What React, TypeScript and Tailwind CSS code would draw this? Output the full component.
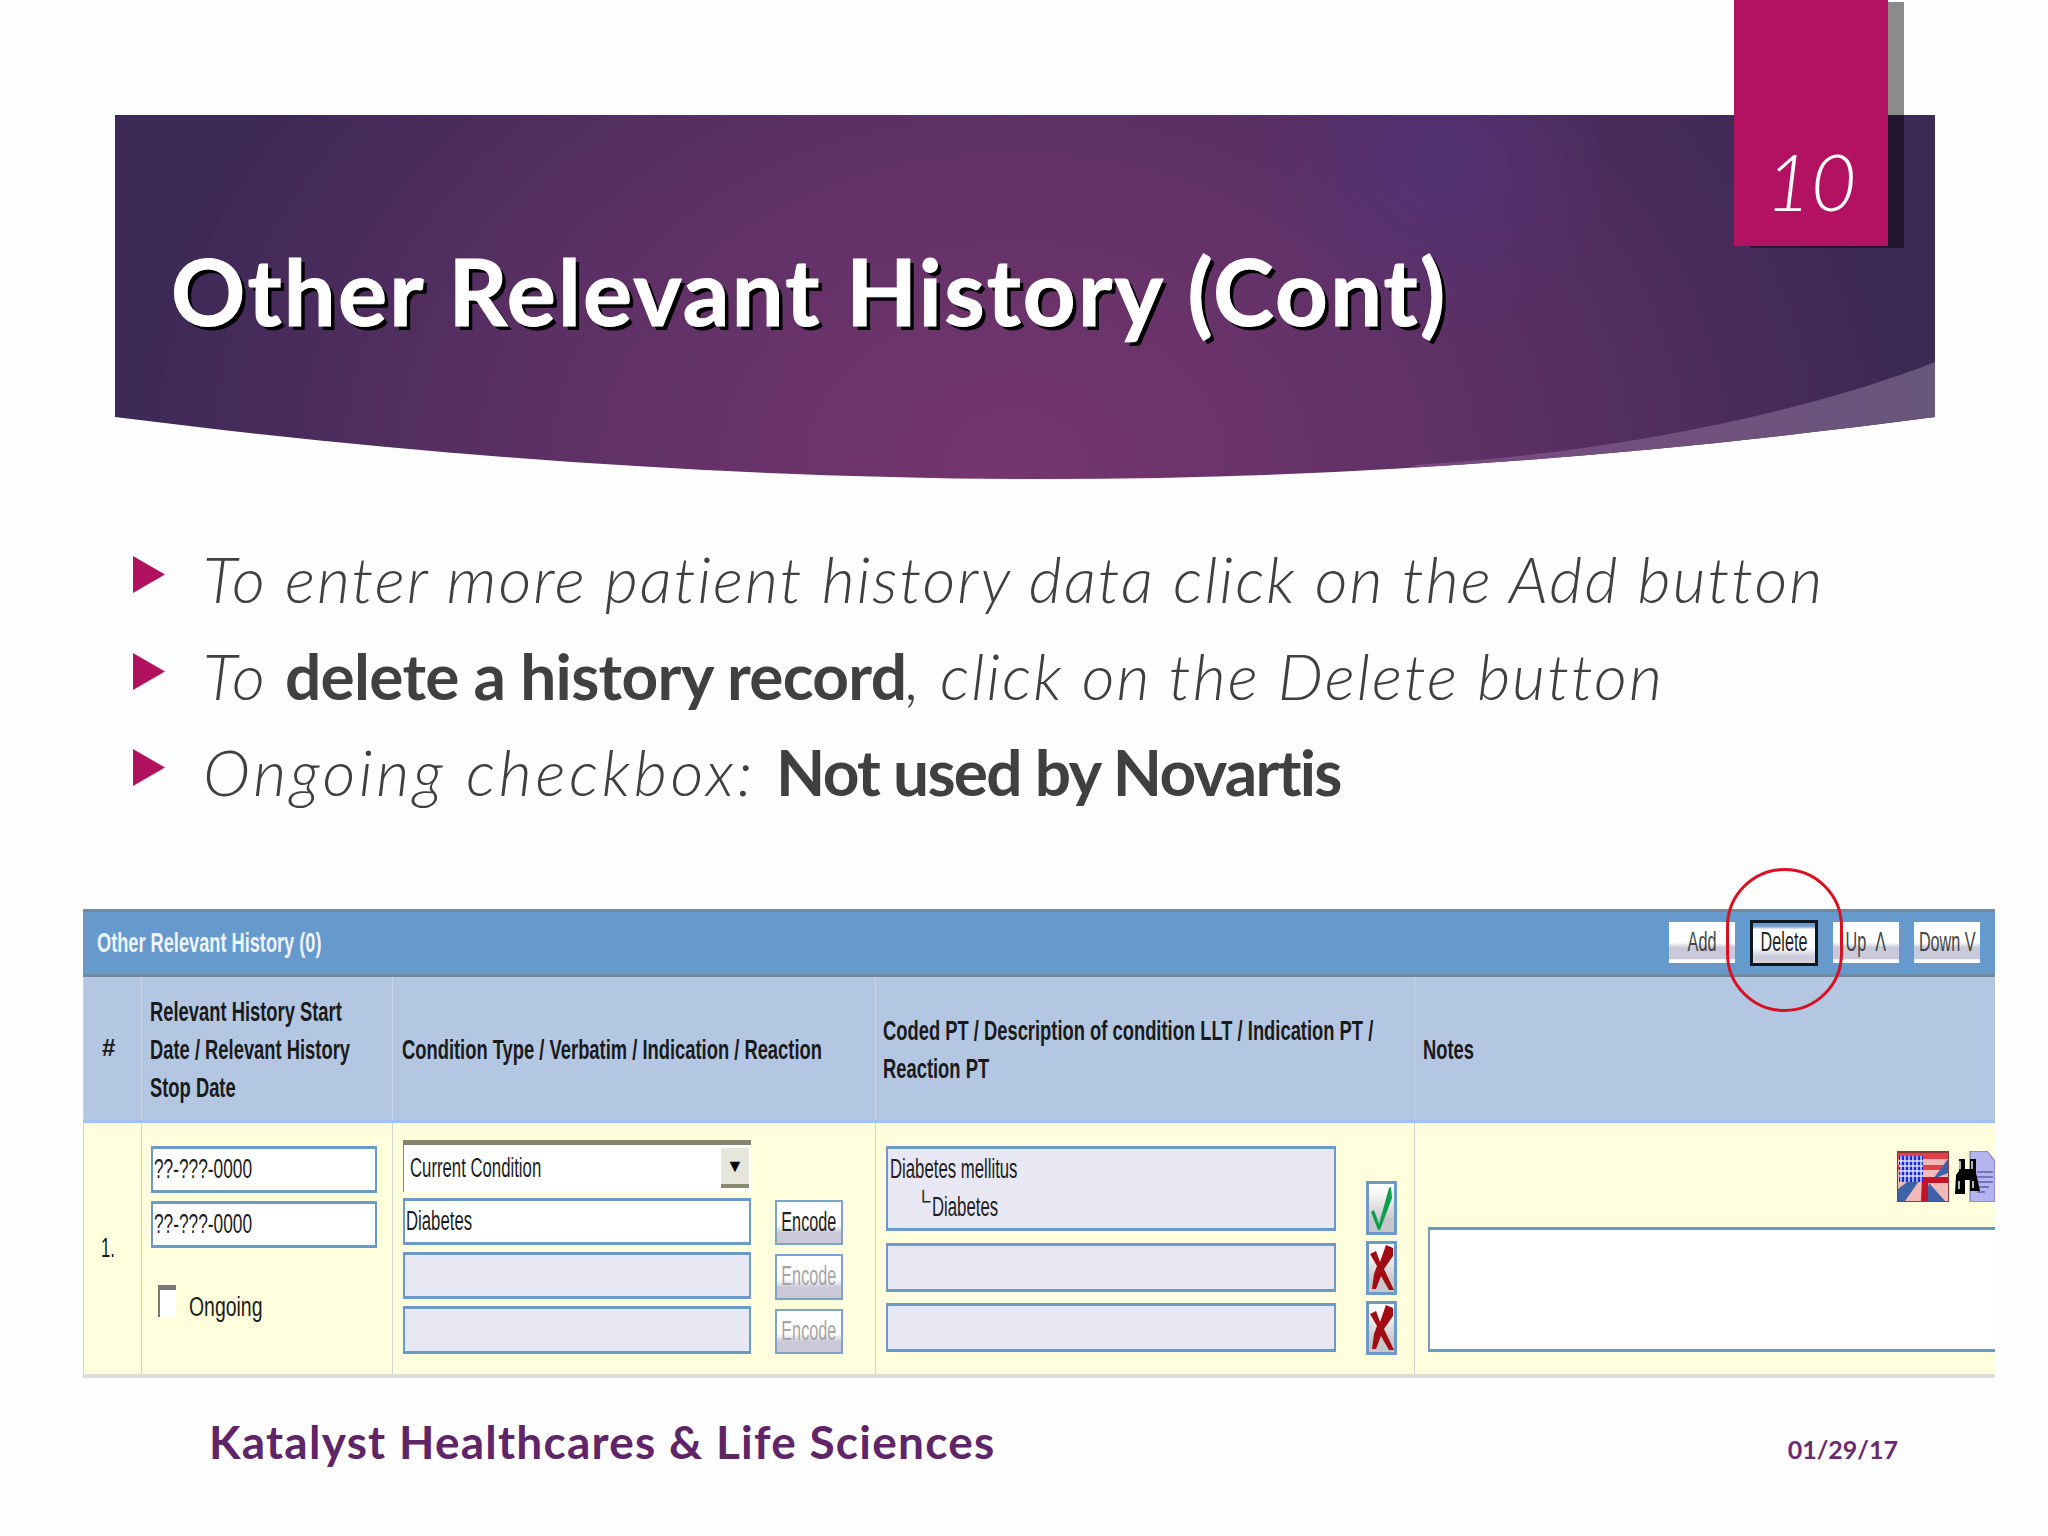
import type { ReactNode } from "react"

const bannerShape = "M0 0H1820V302C1530 340 1240 364 930 364C620 364 300 340 0 302Z"

function Banner() {
  return (
    <div className="relative ml-[115px] mt-[115px] h-[365px] w-[1820px]">
      <svg className="absolute inset-0" width="1820" height="365" viewBox="0 0 1820 365">
        <defs>
          <radialGradient id="ban" gradientUnits="userSpaceOnUse" cx="900" cy="330" r="900" gradientTransform="translate(0 100) scale(1 0.75)">
            <stop offset="0" stopColor="#75366f" />
            <stop offset="0.55" stopColor="#5c3065" />
            <stop offset="1" stopColor="#3c2955" />
          </radialGradient>
          <radialGradient id="glow" gradientUnits="userSpaceOnUse" cx="1320" cy="50" r="170">
            <stop offset="0" stopColor="#533376" stopOpacity="0.9" />
            <stop offset="1" stopColor="#533376" stopOpacity="0" />
          </radialGradient>
          <linearGradient id="swoosh" x1="0" y1="0" x2="1" y2="0">
            <stop offset="0" stopColor="#7b4a80" />
            <stop offset="1" stopColor="#68567c" />
          </linearGradient>
          <clipPath id="banClip">
            <path d={bannerShape} />
          </clipPath>
        </defs>
        <path d={bannerShape} fill="url(#ban)" />
        <path d={bannerShape} fill="url(#glow)" />
        <path d="M1820 247C1700 295 1500 338 1300 350V400H1820Z" fill="url(#swoosh)" clipPath="url(#banClip)" />
      </svg>
      <h1 className="relative pl-[56px] pt-[128px] font-['Lato',sans-serif] text-[92px] font-bold leading-[96px] tracking-[2.2px] whitespace-nowrap text-white [-webkit-text-stroke:1px_white] [text-shadow:4px_4px_0_#000]">
        Other Relevant History (Cont)
      </h1>
    </div>
  )
}

function Bullet({ children }: { children: ReactNode }) {
  return (
    <li className="flex h-[96.5px] gap-[38px]">
      <svg className="mt-[3px] shrink-0" width="32" height="37" viewBox="0 0 32 37">
        <path d="M0 0L32 18.5L0 37Z" fill="#b0125f" />
      </svg>
      <p className="-mt-[10px] font-['Lato',sans-serif] text-[64px] font-light italic leading-[72px] tracking-[2px] whitespace-nowrap text-[#404040]">
        {children}
      </p>
    </li>
  )
}

function Btn({ label, focused }: { label: string; focused?: boolean }) {
  return focused ? (
    <div className="flex h-[46px] w-[68px] items-center justify-center border-[3px] border-[#101820] bg-[linear-gradient(#6f9ccb_0%,#6f9ccb_8%,#ffffff_16%,#ffffff_60%,#c9c9d9_85%,#d6d6e2_100%)]">
      <span className="origin-center scale-x-[0.6] whitespace-nowrap text-[27px] text-[#222]">{label}</span>
    </div>
  ) : (
    <div className="flex h-[41px] w-[66px] items-center justify-center bg-[linear-gradient(#ffffff_0%,#ffffff_50%,#c9c9d9_62%,#c9c9d9_90%,#ffffff_92%)]">
      <span className="origin-center scale-x-[0.6] whitespace-nowrap text-[27px] text-[#444]">{label}</span>
    </div>
  )
}

function Encode({ disabled, h }: { disabled?: boolean; h: string }) {
  return (
    <div className={`${h} flex w-[68px] items-center justify-center border-2 border-[#7ba3cc] bg-[linear-gradient(#ffffff_0%,#ffffff_55%,#c9c9d9_75%,#c9c9d9_100%)]`}>
      <span className={disabled ? "origin-center scale-x-[0.6] whitespace-nowrap text-[27px] text-[#a5a5a5]" : "origin-center scale-x-[0.6] whitespace-nowrap text-[27px] text-[#222]"}>
        Encode
      </span>
    </div>
  )
}

function IconBtn({ kind }: { kind: "check" | "x" }) {
  return (
    <div className="h-[54px] w-[31px] border-[3px] border-[#6b9ac9] bg-[linear-gradient(#ffffff_0%,#f4f4f4_25%,#c6c6cc_75%,#c6c6cc_100%)]">
      <svg width="25" height="48" viewBox="0 0 25 48">
        {kind === "check" ? (
          <path d="M2 28L5 26L10 40L20 4L22 3L23 14L11 46H9Z" fill="#0aa04a" />
        ) : (
          <path d="M1 10L7 7L11 18L17 1L24 4L24 12L15 25L25 46L20 46L12 32L7 45H3L5 30L8 22Z" fill="#a00c12" />
        )}
      </svg>
    </div>
  )
}

function Field({ className, children }: { className: string; children?: ReactNode }) {
  return (
    <div className={`${className} flex items-center overflow-hidden border-2 border-y-[3px] border-[#6b9ac9] pl-[1px]`}>
      {children}
    </div>
  )
}

function Cell({ children, className = "scale-x-[0.62]" }: { children: string; className?: string }) {
  return <span className={`block origin-left whitespace-nowrap text-[27px] leading-[38px] text-[#1c1c1c] ${className}`}>{children}</span>
}

function Head({ children }: { children: string }) {
  return <span className="block origin-left scale-x-[0.68] whitespace-nowrap text-[27px] font-bold leading-[38px] text-[#1a1a1a]">{children}</span>
}

function FlagIcons() {
  return (
    <div className="flex justify-end gap-[6px]">
      <svg width="52" height="51" viewBox="0 0 52 51">
        <rect width="52" height="51" fill="#8a3a3f" />
        <rect x="1" y="2" width="50" height="48" fill="#f3b9b9" />
        <path d="M1 2H51V8H1ZM1 14H51V19H1Z" fill="#e0404a" />
        <path d="M1 38L14 28L22 30L8 50H1ZM28 50L32 32L48 50ZM36 28L51 8V22Z" fill="#3d62a8" />
        <path d="M25 26H51V32H31V50H24Z" fill="#c0142a" />
        <rect x="2" y="5" width="24" height="26" fill="#1a28d8" />
        <path d="M4 5V31M8 5V31M12 5V31M16 5V31M20 5V31M24 5V31M2 10H26M2 15H26M2 20H26M2 25H26" stroke="#dfe4ff" strokeWidth="1.4" />
      </svg>
      <svg width="40" height="51" viewBox="0 0 40 51">
        <path d="M15 0H32L40 10V51H15Z" fill="#b4b4ee" stroke="#6a6ab0" />
        <path d="M22 21H38M22 26H38M22 31H38M22 36H34M22 41H30" stroke="#6060a8" strokeWidth="1.6" />
        <path d="M4 8H10V18H15V8H21V22L25 40H15V29H10V43H0L1 24L4 20Z" fill="#000" />
        <path d="M5 10V18M17 10V18M4 30V38M18 30V37" stroke="#fff" strokeWidth="1.4" />
      </svg>
    </div>
  )
}

function DataTable() {
  return (
    <div className="relative ml-[83px] mt-[66px] w-[1912px]">
      <div className="flex h-[68px] items-center justify-between border-y-[3px] border-[#76889b] bg-[#6699cc] pl-[14px] pr-[15px]">
        <span className="origin-left scale-x-[0.65] whitespace-nowrap text-[28px] font-bold text-[#eef4fb]">Other Relevant History (0)</span>
        <div className="flex items-center gap-[15px]">
          <Btn label="Add" />
          <Btn label="Delete" focused />
          <Btn label={"Up\u00a0\u00a0Λ"} />
          <Btn label="Down V" />
        </div>
      </div>

      <div className="grid h-[146px] grid-cols-[59px_251px_483px_539px_580px] border-b-[3px] border-[#9cc3ec] bg-[#b3c7e2]">
        <div className="flex items-center border-x border-[#c6d4e6] pl-[18px]">
          <span className="text-[24px] font-bold text-[#1a1a1a]">#</span>
        </div>
        <div className="flex flex-col justify-center border-r border-[#c6d4e6] pl-[8px] pt-[3px]">
          <Head>Relevant History Start</Head>
          <Head>Date / Relevant History</Head>
          <Head>Stop Date</Head>
        </div>
        <div className="flex flex-col justify-center border-r border-[#c6d4e6] pl-[9px] pt-[3px]">
          <Head>Condition Type / Verbatim / Indication / Reaction</Head>
        </div>
        <div className="flex flex-col justify-center border-r border-[#c6d4e6] pl-[7px] pt-[3px]">
          <Head>Coded PT / Description of condition LLT / Indication PT /</Head>
          <Head>Reaction PT</Head>
        </div>
        <div className="flex flex-col justify-center pl-[8px] pt-[3px]">
          <Head>Notes</Head>
        </div>
      </div>

      <div className="grid h-[255px] grid-cols-[59px_251px_483px_539px_580px] border-b-4 border-[#dcdcdc] bg-[#ffffdd]">
        <div className="flex items-center border-x border-[#ccd4dc] pl-[17px]">
          <Cell>1.</Cell>
        </div>
        <div className="flex flex-col gap-[8px] border-r border-[#ccd4dc] pl-[9px] pt-[23px]">
          <Field className="h-[47px] w-[226px] bg-white"><Cell className="scale-x-[0.64]">??-???-0000</Cell></Field>
          <Field className="h-[47px] w-[226px] bg-white"><Cell className="scale-x-[0.64]">??-???-0000</Cell></Field>
          <div className="mt-[20px] flex items-center gap-[13px] pl-[7px]">
            <div className="h-[32px] w-[18px] border-l-2 border-t-[5px] border-[#777] bg-white" />
            <div className="mt-[12px] w-[90px]">
              <Cell className="scale-x-[0.72]">Ongoing</Cell>
            </div>
          </div>
        </div>
        <div className="flex gap-[24px] border-r border-[#ccd4dc] pl-[10px]">
          <div className="flex w-[348px] flex-col pt-[17px]">
            <div className="flex h-[52px] items-center justify-between border-l border-t-[5px] border-[#85856f] bg-white pl-[6px] pr-[2px]">
              <Cell>Current Condition</Cell>
              <div className="flex h-[40px] w-[28px] items-center justify-center border-b-[4px] border-[#8a8a70] bg-[#e6e6dc] text-[18px] text-black">▼</div>
            </div>
            <Field className="mt-[6px] h-[47px] bg-white"><Cell>Diabetes</Cell></Field>
            <Field className="mt-[7px] h-[47px] bg-[#e8e8f4]" />
            <Field className="mt-[7px] h-[48px] bg-[#e8e8f4]" />
          </div>
          <div className="flex flex-col justify-end gap-[9px] pb-[20px]">
            <Encode h="h-[45px]" />
            <Encode h="h-[46px]" disabled />
            <Encode h="h-[45px]" disabled />
          </div>
        </div>
        <div className="flex gap-[30px] border-r border-[#ccd4dc] pl-[10px]">
          <div className="flex w-[450px] flex-col pt-[23px]">
            <Field className="h-[85px] bg-[#e8e8f4]">
              <div className="pl-[1px]">
                <Cell>Diabetes mellitus</Cell>
                <div className="flex items-start pl-[26px]">
                  <span className="w-[16px] text-[20px] leading-[26px] text-[#222]">└</span>
                  <Cell>Diabetes</Cell>
                </div>
              </div>
            </Field>
            <Field className="mt-[12px] h-[49px] bg-[#e8e8f4]" />
            <Field className="mt-[11px] h-[49px] bg-[#e8e8f4]" />
          </div>
          <div className="flex flex-col gap-[6px] pt-[58px]">
            <IconBtn kind="check" />
            <IconBtn kind="x" />
            <IconBtn kind="x" />
          </div>
        </div>
        <div className="pt-[28px]">
          <FlagIcons />
          <div className="ml-[13px] mt-[25px] h-[125px] border-y-[3px] border-l-2 border-[#6b9ac9] bg-white" />
        </div>
      </div>

      <div className="absolute left-[1643px] top-[-41px] h-[144px] w-[117px] rounded-full border-[3px] border-[#d81020]" />
    </div>
  )
}

export default function App() {
  return (
    <div className="relative h-[1536px] w-[2048px] overflow-hidden bg-[#fefefe] font-['Liberation_Sans',sans-serif]">
      <Banner />

      {/* page number tab */}
      <div className="absolute left-[1734px] top-0 flex h-[246px] w-[154px] items-end justify-center bg-[#b31263] pb-[24px] shadow-[16px_2px_0_rgba(0,0,0,0.45)]">
        <span className="font-['Lato',sans-serif] text-[78px] font-light italic leading-[82px] text-white">10</span>
      </div>

      <ul className="ml-[133px] mt-[73px]">
        <Bullet>To enter more patient history data click on the Add button</Bullet>
        <Bullet>
          To <b className="font-bold not-italic tracking-[-0.7px]">delete a history record</b>, click on the Delete button
        </Bullet>
        <Bullet>
          <span className="tracking-[3.7px]">Ongoing checkbox: </span>
          <b className="font-bold not-italic tracking-[-1.7px]">Not used by Novartis</b>
        </Bullet>
      </ul>

      <DataTable />

      <div className="mt-[29px] flex items-center justify-between pl-[209px] pr-[150px]">
        <span className="font-['Lato',sans-serif] text-[46px] font-bold tracking-[1.25px] text-[#5f2568]">Katalyst Healthcares &amp; Life Sciences</span>
        <span className="mt-[18px] font-['Lato',sans-serif] text-[25px] font-bold text-[#6b2a6f]">01/29/17</span>
      </div>
    </div>
  )
}
